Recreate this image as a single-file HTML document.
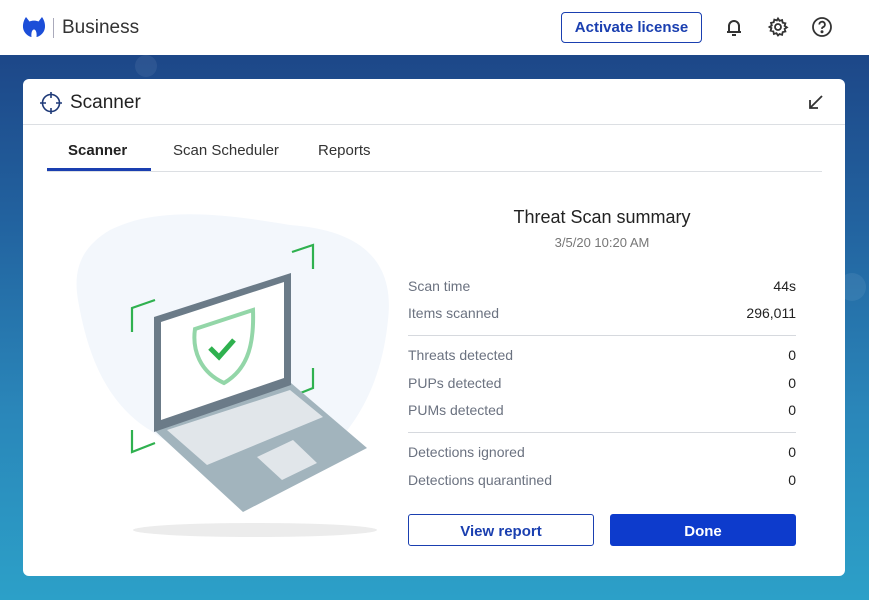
<!DOCTYPE html>
<html><head><meta charset="utf-8"><style>
*{margin:0;padding:0;box-sizing:border-box}
body{width:869px;height:600px;overflow:hidden;font-family:"Liberation Sans",sans-serif;position:relative;background:#fff}
.top{position:absolute;left:0;top:0;width:869px;height:55px;background:#fff}
.bg{position:absolute;left:0;top:55px;width:869px;height:545px;background:linear-gradient(180deg,#1d4788 0%,#22629f 30%,#2a86b9 65%,#2ca0c8 100%)}
.card{position:absolute;left:23px;top:79px;width:822px;height:497px;background:#fff;border-radius:6px}
.abs{position:absolute}
.row{position:absolute;left:408px;width:388px;font-size:14px;color:#6b7280}
.row span{position:absolute;right:0;color:#222}
.hr{position:absolute;left:408px;width:388px;height:1px;background:#d6d9de}
.btn{position:absolute;top:514px;height:32px;width:186px;border-radius:3px;font-size:15px;font-weight:bold;display:flex;align-items:center;justify-content:center;padding-top:3px}
</style></head><body>
<div class="top">
<svg class="abs" style="left:22px;top:16px" width="24" height="22" viewBox="0 0 24 22"><path d="M4 1 C1 5 0 11 2 15 C4 19 8 21 9.5 21 C9 17 10 13.5 12 13.5 C14 13.5 15 17 14.5 21 C16 21 20 19 22 15 C24 11 23 5 20 1 L16.5 5.5 C14 4.3 10 4.3 7.5 5.5 Z" fill="#1c4ed8"/></svg>
<div class="abs" style="left:53px;top:18px;width:1px;height:20px;background:#aab"></div>
<div class="abs" style="left:62px;top:17px;font-size:19px;color:#333">Business</div>
<div class="abs" style="left:561px;top:12px;width:141px;height:31px;border:1px solid #1a3fb0;border-radius:4px;color:#1a3fb0;font-weight:bold;font-size:15px;text-align:center;line-height:29px">Activate license</div>
<svg class="abs" style="left:723px;top:16px" width="22" height="22" viewBox="0 0 22 22" fill="none" stroke="#333" stroke-width="2"><path d="M4 16h14M6 16V10a5 5 0 0 1 10 0v6M9 19h4"/></svg>
<svg class="abs" style="left:767px;top:16px" width="22" height="22" viewBox="0 0 22 22" fill="none" stroke="#333" stroke-width="1.8"><circle cx="11" cy="11" r="3"/><path d="M11 2.5l1.5 2.3 2.6-.8.6 2.7 2.7.6-.8 2.6 2.3 1.5-2.3 1.5.8 2.6-2.7.6-.6 2.7-2.6-.8L11 19.5l-1.5-2.3-2.6.8-.6-2.7-2.7-.6.8-2.6L2.5 11l2.3-1.5-.8-2.6 2.7-.6.6-2.7 2.6.8z"/></svg>
<svg class="abs" style="left:811px;top:16px" width="22" height="22" viewBox="0 0 22 22" fill="none" stroke="#333" stroke-width="1.8"><circle cx="11" cy="11" r="9"/><path d="M8.3 8.5a2.8 2.8 0 1 1 3.8 2.6c-.8.4-1.1.9-1.1 1.8"/><circle cx="11" cy="15.8" r=".6" fill="#333"/></svg>
</div>
<div class="bg"><div class="abs" style="left:135px;top:0;width:22px;height:22px;border-radius:50%;background:rgba(255,255,255,.07)"></div><div class="abs" style="left:838px;top:218px;width:28px;height:28px;border-radius:50%;background:rgba(255,255,255,.07)"></div></div>
<div class="card">
<svg class="abs" style="left:16px;top:12px" width="24" height="24" viewBox="0 0 24 24" fill="none" stroke="#1f3a78" stroke-width="1.6"><circle cx="12" cy="12" r="8.5"/><path d="M12 1v6M12 17v6M1 12h6M17 12h6"/></svg>
<div class="abs" style="left:47px;top:13px;font-size:19px;color:#222">Scanner</div>
<svg class="abs" style="left:784px;top:14px" width="18" height="18" viewBox="0 0 18 18" fill="none" stroke="#333" stroke-width="1.8"><path d="M15 3L3 15M3 7v8h8"/></svg>
<div class="abs" style="left:0;top:45px;width:822px;height:1px;background:#dcdfe3"></div>
<div class="abs" style="left:45px;top:63px;font-size:15px;font-weight:bold;color:#222">Scanner</div>
<div class="abs" style="left:150px;top:63px;font-size:15px;color:#333">Scan Scheduler</div>
<div class="abs" style="left:295px;top:63px;font-size:15px;color:#333">Reports</div>
<div class="abs" style="left:24px;top:92px;width:775px;height:1px;background:#dcdfe3"></div>
<div class="abs" style="left:24px;top:89px;width:104px;height:3px;background:#1a3fb0"></div>
</div>
<svg class="abs" style="left:0;top:0" width="869" height="600">
<path d="M110 230 C160 205 230 215 290 225 C360 230 395 260 388 320 C382 380 360 420 330 450 C290 480 200 470 150 430 C100 400 85 340 78 300 C72 265 85 245 110 230Z" fill="#f3f7fc"/>
<ellipse cx="255" cy="530" rx="122" ry="7" fill="#ececec"/>
<g fill="none" stroke="#2fb14f" stroke-width="2.2"><path d="M292 252l21-7v24M155 300l-23 8v24M132 430v22l23-9M313 368v20l-20 8"/></g>
<path d="M154 430L291 383L367 448L243 512Z" fill="#a2b4bd"/>
<path d="M167 430L290 390L323 417L207 465Z" fill="#e1e6ea"/>
<path d="M257 457L293 440L317 463L282 480Z" fill="#e1e6ea"/>
<path d="M154 317L291 273L291 385L154 432Z" fill="#6b7b88"/>
<path d="M161 322L284 282L284 378L161 420Z" fill="#fff"/>
<path d="M195 329L253 310C254 340 250 368 224 383C200 372 192 350 195 329Z" fill="none" stroke="#93d6a8" stroke-width="4"/>
<path d="M210 348l9 9 15-17" fill="none" stroke="#2fb14f" stroke-width="5"/>
</svg>
<div class="abs" style="left:408px;top:207px;width:388px;text-align:center;font-size:18px;color:#222">Threat Scan summary</div>
<div class="abs" style="left:408px;top:235px;width:388px;text-align:center;font-size:13px;color:#777">3/5/20 10:20 AM</div>
<div class="row" style="top:278px">Scan time<span>44s</span></div>
<div class="row" style="top:305px">Items scanned<span>296,011</span></div>
<div class="hr" style="top:335px"></div>
<div class="row" style="top:347px">Threats detected<span>0</span></div>
<div class="row" style="top:375px">PUPs detected<span>0</span></div>
<div class="row" style="top:402px">PUMs detected<span>0</span></div>
<div class="hr" style="top:432px"></div>
<div class="row" style="top:444px">Detections ignored<span>0</span></div>
<div class="row" style="top:472px">Detections quarantined<span>0</span></div>
<div class="btn" style="left:408px;border:1px solid #1a3fb0;color:#1a3fb0;background:#fff">View report</div>
<div class="btn" style="left:610px;background:#0d3bcc;color:#fff">Done</div>
</body></html>
